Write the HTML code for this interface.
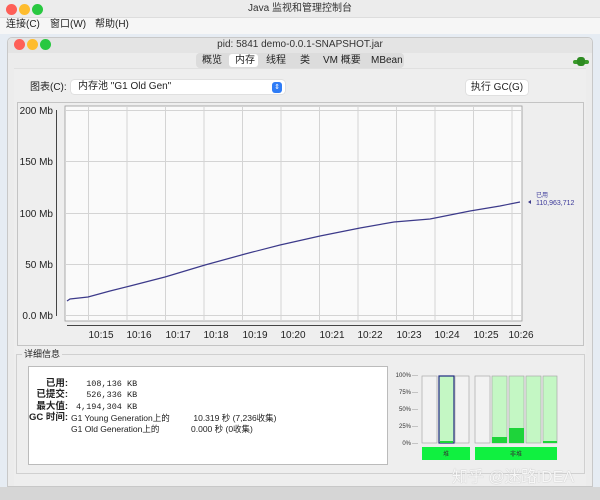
<!DOCTYPE html>
<html><head><meta charset="utf-8"><style>
*{margin:0;padding:0;box-sizing:border-box}
body{width:600px;height:500px;overflow:hidden;background:#e6ecf3;font-family:"Liberation Sans","Noto Sans CJK SC",sans-serif;font-size:10px;color:#222;position:relative;line-height:12px}
.abs{position:absolute;line-height:12px;white-space:nowrap}
.dot{position:absolute;width:11px;height:11px;border-radius:50%}
</style></head><body>
<div class="abs" style="left:0;top:0;width:600px;height:18px;background:#ececec;border-bottom:1px solid #ddd"></div>
<div class="dot" style="left:6px;top:4px;background:#fe5f57"></div>
<div class="dot" style="left:19px;top:4px;background:#febc2e"></div>
<div class="dot" style="left:32px;top:4px;background:#28c840"></div>
<div class="abs" style="left:0;top:3px;width:600px;text-align:center;font-size:10px;color:#333">Java 监视和管理控制台</div>
<div class="abs" style="left:0;top:18px;width:600px;height:16px;background:#f6f6f6"></div>
<div class="abs" style="left:6px;top:19px;font-size:10px">连接(C)</div>
<div class="abs" style="left:50px;top:19px;font-size:10px">窗口(W)</div>
<div class="abs" style="left:95px;top:19px;font-size:10px">帮助(H)</div>
<!-- inner window -->
<div class="abs" style="left:7px;top:37px;width:586px;height:450px;background:#ececec;border:1px solid #c8c8c8;border-radius:5px 5px 0 0"></div>
<div class="abs" style="left:8px;top:38px;width:584px;height:15px;background:#e4e4e4;border-radius:5px 5px 0 0"></div>
<div class="dot" style="left:14px;top:39px;background:#fe5f57"></div>
<div class="dot" style="left:27px;top:39px;background:#febc2e"></div>
<div class="dot" style="left:40px;top:39px;background:#28c840"></div>
<div class="abs" style="left:8px;top:39px;width:584px;text-align:center;font-size:10px;color:#333">pid: 5841 demo-0.0.1-SNAPSHOT.jar</div>
<div class="abs" style="left:14px;top:68px;width:572px;height:418px;background:#eeeeee;border-top:1px solid #e0e0e0"></div>
<div class="abs" style="left:196px;top:53px;width:208px;height:15px;background:#dcdcdc;border-radius:4px"></div>
<div class="abs" style="left:229px;top:54px;width:29px;height:13px;background:#fff;border-radius:3px"></div>
<div class="abs" style="left:202px;top:55px">概览</div>
<div class="abs" style="left:235px;top:55px">内存</div>
<div class="abs" style="left:266px;top:55px">线程</div>
<div class="abs" style="left:300px;top:55px">类</div>
<div class="abs" style="left:323px;top:55px">VM 概要</div>
<div class="abs" style="left:371px;top:55px">MBean</div>
<div class="abs" style="left:573px;top:60px;width:16px;height:4px;background:#3a9a2a;border-radius:2px"></div>
<div class="abs" style="left:577px;top:57px;width:8px;height:9px;background:#2e8b22;border-radius:3px"></div>
<div class="abs" style="left:30px;top:82px">图表(C):</div>
<div class="abs" style="left:71px;top:80px;width:214px;height:14px;background:#fff;border-radius:3px;box-shadow:0 0 1px #999"></div>
<div class="abs" style="left:78px;top:81px">内存池 "G1 Old Gen"</div>
<div class="abs" style="left:272px;top:82px;width:10px;height:11px;background:#2f7cf6;border-radius:3px;color:#fff;font-size:7px;text-align:center;line-height:11px">⇕</div>
<div class="abs" style="left:466px;top:80px;width:62px;height:15px;background:#fff;border-radius:3px;box-shadow:0 0 1px #999;text-align:center;line-height:15px">执行 GC(G)</div>
<!-- chart -->
<div class="abs" style="left:17px;top:102px;width:567px;height:244px;border:1px solid #c4c4c4;background:#eeeeee"></div>
<svg class="abs" style="left:0;top:0" width="600" height="500">
<rect x="65" y="106" width="457" height="215" fill="#fafafa" stroke="#999" stroke-width="0.8"/>
<g stroke="#d4d4d4" stroke-width="1">
<line x1="65" x2="522" y1="110.5" y2="110.5"/><line x1="65" x2="522" y1="161.5" y2="161.5"/><line x1="65" x2="522" y1="213.5" y2="213.5"/><line x1="65" x2="522" y1="264.5" y2="264.5"/><line x1="65" x2="522" y1="315.5" y2="315.5"/>
<line x1="88.5" x2="88.5" y1="106" y2="321"/><line x1="127" x2="127" y1="106" y2="321"/><line x1="165.5" x2="165.5" y1="106" y2="321"/><line x1="204" x2="204" y1="106" y2="321"/><line x1="242.5" x2="242.5" y1="106" y2="321"/><line x1="281" x2="281" y1="106" y2="321"/><line x1="319.5" x2="319.5" y1="106" y2="321"/><line x1="358" x2="358" y1="106" y2="321"/><line x1="396.5" x2="396.5" y1="106" y2="321"/><line x1="435" x2="435" y1="106" y2="321"/><line x1="473.5" x2="473.5" y1="106" y2="321"/><line x1="512" x2="512" y1="106" y2="321"/>
</g>
<g stroke="#444" stroke-width="1">
<line x1="56.5" x2="56.5" y1="110" y2="316"/><line x1="67" x2="521" y1="325.5" y2="325.5"/>
</g>
<polyline fill="none" stroke="#3c3a8a" stroke-width="1.2" points="67,301 70,299 88,297 110,291 130,286 165,277 205,265 245,254 280,245 320,236 360,228 394,222 430,219 450,215 470,211 500,206 520,202"/>
<polygon points="528,202 531,200 531,204" fill="#3c3a8a"/>
<g font-family="Liberation Sans" font-size="10" fill="#222" text-anchor="end">
<text x="53" y="114">200 Mb</text><text x="53" y="165">150 Mb</text><text x="53" y="217">100 Mb</text><text x="53" y="268">50 Mb</text><text x="53" y="319">0.0 Mb</text>
</g>
<g font-family="Liberation Sans" font-size="10" fill="#222" text-anchor="middle">
<text x="101" y="338">10:15</text><text x="139" y="338">10:16</text><text x="178" y="338">10:17</text><text x="216" y="338">10:18</text><text x="255" y="338">10:19</text><text x="293" y="338">10:20</text><text x="332" y="338">10:21</text><text x="370" y="338">10:22</text><text x="409" y="338">10:23</text><text x="447" y="338">10:24</text><text x="486" y="338">10:25</text><text x="521" y="338">10:26</text>
</g>
<text x="536" y="197" font-size="6" fill="#3c3a9a" font-family="Liberation Sans,Noto Sans CJK SC">已用</text>
<text x="536" y="205" font-size="7" fill="#3c3a9a" font-family="Liberation Sans">110,963,712</text>
</svg>
<!-- details -->
<div class="abs" style="left:16px;top:354px;width:569px;height:120px;border:1px solid #d0d0d0"></div>
<div class="abs" style="left:22px;top:348px;font-size:9px;background:#eee;padding:0 2px">详细信息</div>
<div class="abs" style="left:28px;top:366px;width:360px;height:99px;background:#fff;border:1px solid #bbb"></div>
<div class="abs" style="left:24px;top:378px;font-size:9.5px;line-height:11.3px;font-weight:bold;text-align:right;width:44px">已用:<br>已提交:<br>最大值:<br>GC 时间:</div>
<div class="abs" style="left:76px;top:379px;font-family:'Liberation Mono',monospace;font-size:8.5px;line-height:11.3px">&nbsp;&nbsp;108,136 KB<br>&nbsp;&nbsp;526,336 KB<br>4,194,304 KB</div>
<div class="abs" style="left:71px;top:413px;font-size:8.5px;line-height:11.3px">G1 Young Generation上的<br>G1 Old Generation上的</div>
<div class="abs" style="left:191px;top:413px;font-size:8.5px;line-height:11.3px;white-space:pre"> 10.319 秒 (7,236收集)
0.000 秒 (0收集)</div>
<svg class="abs" style="left:0;top:0" width="600" height="500">
<g font-family="Liberation Sans" font-size="6" fill="#333" text-anchor="end">
<text x="411" y="377">100%</text><text x="411" y="394">75%</text><text x="411" y="411">50%</text><text x="411" y="428">25%</text><text x="411" y="445">0%</text>
</g>
<g stroke="#999" stroke-width="0.5"><line x1="412" x2="418" y1="375.5" y2="375.5"/><line x1="412" x2="418" y1="392.5" y2="392.5"/><line x1="412" x2="418" y1="409.5" y2="409.5"/><line x1="412" x2="418" y1="426.5" y2="426.5"/><line x1="412" x2="418" y1="443.5" y2="443.5"/></g>
<g stroke="#aaa" stroke-width="0.7">
<rect x="422" y="376" width="15" height="67" fill="#f2f2f2"/>
<rect x="439" y="376" width="15" height="67" fill="#c4f7c4" stroke="#1f2a80" stroke-width="1.2"/>
<rect x="455" y="376" width="14" height="67" fill="#f2f2f2"/>
<rect x="475" y="376" width="15" height="67" fill="#f2f2f2"/>
<rect x="492" y="376" width="15" height="67" fill="#c4f7c4"/>
<rect x="509" y="376" width="15" height="67" fill="#c4f7c4"/>
<rect x="526" y="376" width="15" height="67" fill="#c4f7c4"/>
<rect x="543" y="376" width="14" height="67" fill="#c4f7c4"/>
</g>
<rect x="492" y="437" width="15" height="6" fill="#1ed43a"/>
<rect x="509" y="428" width="15" height="15" fill="#1ed43a"/>
<rect x="440" y="441" width="13" height="2" fill="#1ed43a"/>
<rect x="543" y="441" width="14" height="2" fill="#1ed43a"/>
<rect x="422" y="447" width="48" height="13" fill="#10f040"/>
<rect x="475" y="447" width="82" height="13" fill="#10f040"/>
<text x="446" y="456" font-size="6" text-anchor="middle" fill="#333" font-family="Noto Sans CJK SC">堆</text>
<text x="516" y="456" font-size="6" text-anchor="middle" fill="#333" font-family="Noto Sans CJK SC">非堆</text>
</svg>
<div class="abs" style="left:0;top:487px;width:600px;height:13px;background:#d6d6d6"></div>
<div class="abs" style="left:452px;top:469px;font-size:16px;line-height:18px;color:#f7f7f7;text-shadow:0 0 1px #aaa">知乎 @迷路IDEA</div>
</body></html>
